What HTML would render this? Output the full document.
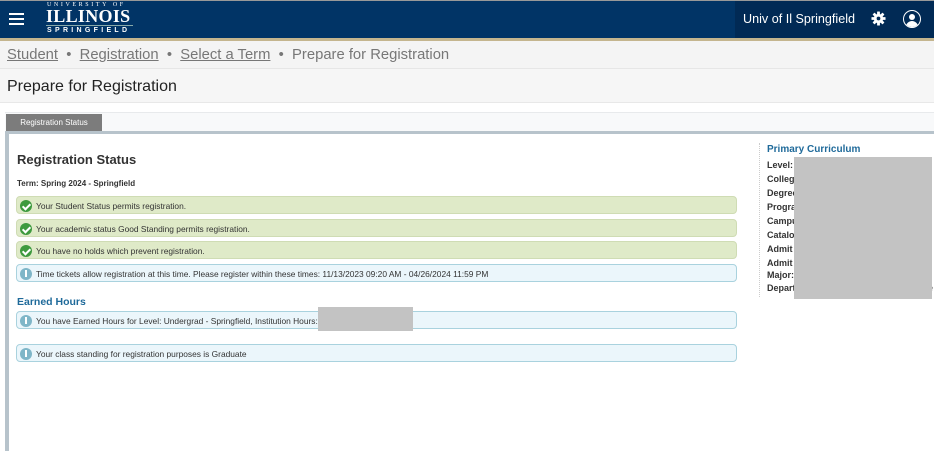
<!DOCTYPE html>
<html><head><style>
body{margin:0;width:934px;height:451px;overflow:hidden;background:#fff;font-family:"Liberation Sans",sans-serif;position:relative}
.a{position:absolute}
.msg{position:absolute;left:16px;width:721px;height:18px;border-radius:4px;font-size:8.4px;color:#333;line-height:18px;padding-left:19px;box-sizing:border-box}
.g{background:#dfeac8;border:1px solid #cfdcb4}
.b{background:#ebf6fb;border:1px solid #a9d2de}
.ic{position:absolute;left:3px;top:2.5px;width:12px;height:12px;border-radius:50%}
.g .ic{background:#3e9a3e}
.b .ic{background:#7fb6c8}
.g .ic:after{content:"";position:absolute;left:3.5px;top:2px;width:3px;height:6px;border:solid #fff;border-width:0 2px 2px 0;transform:rotate(45deg)}
.b .ic:after{content:"";position:absolute;left:5px;top:2.5px;width:2px;height:7px;background:#fff}
.lbl{position:absolute;left:767px;font-size:9px;font-weight:bold;color:#333}
</style></head><body>
<div class="a" style="left:0;top:0;width:934px;height:1px;background:#999"></div>
<div class="a" style="left:0;top:1px;width:934px;height:37px;background:#013466"></div>
<div class="a" style="left:735px;top:1px;width:199px;height:37px;background:#012a55"></div>
<div class="a" style="left:0;top:38px;width:934px;height:3px;background:#c4b58e"></div>
<div class="a" style="left:9px;top:13px;width:15px;height:2px;background:#fff;box-shadow:0 5px 0 #fff,0 10px 0 #fff"></div>
<div class="a" style="left:47px;top:2px;color:#fff;font-family:'Liberation Serif',serif;font-size:6px;letter-spacing:2.6px">UNIVERSITY OF</div>
<div class="a" style="left:46px;top:7px;color:#fff;font-family:'Liberation Serif',serif;font-size:18px;font-weight:bold;letter-spacing:0.3px;line-height:18px">ILLINOIS</div>
<div class="a" style="left:46px;top:25px;width:87px;height:1px;background:#8aa"></div>
<div class="a" style="left:47px;top:27px;color:#fff;font-size:7px;font-weight:bold;letter-spacing:3.3px">SPRINGFIELD</div>
<div class="a" style="left:743px;top:12px;color:#fff;font-size:12.6px">Univ of Il Springfield</div>
<svg class="a" style="left:871px;top:11px" width="15" height="15" viewBox="0 0 16 16"><g fill="#fff"><circle cx="8" cy="8" r="5"/><rect x="6.5" y="0.5" width="3" height="15" rx="0.5"/><rect x="6.5" y="0.5" width="3" height="15" rx="0.5" transform="rotate(45 8 8)"/><rect x="6.5" y="0.5" width="3" height="15" rx="0.5" transform="rotate(90 8 8)"/><rect x="6.5" y="0.5" width="3" height="15" rx="0.5" transform="rotate(135 8 8)"/></g><circle cx="8" cy="8" r="2" fill="#012a55"/></svg>
<div class="a" style="left:903px;top:10px;width:16px;height:16px;border:1.5px solid #fff;border-radius:50%;overflow:hidden">
<div class="a" style="left:5px;top:3px;width:6px;height:6px;background:#fff;border-radius:50%"></div>
<div class="a" style="left:2px;top:10px;width:12px;height:8px;background:#fff;border-radius:6px 6px 0 0"></div></div>
<div class="a" style="left:0;top:41px;width:934px;height:27px;background:#f4f4f4;border-bottom:1px solid #e6e6e6"></div>
<div class="a" style="left:7px;top:47px;font-size:14.8px;color:#777;white-space:nowrap"><u>Student</u> &nbsp;•&nbsp; <u>Registration</u> &nbsp;•&nbsp; <u>Select a Term</u> &nbsp;•&nbsp; Prepare for Registration</div>
<div class="a" style="left:0;top:69px;width:934px;height:33px;background:#f6f6f6;border-bottom:1px solid #e8e8e8"></div>
<div class="a" style="left:7px;top:78px;font-size:16px;color:#222">Prepare for Registration</div>
<div class="a" style="left:5px;top:112px;width:929px;height:18px;background:#f8f9fa;border-top:1px solid #e8eaec"></div>
<div class="a" style="left:6px;top:114px;width:96px;height:17px;background:#7c7c7c;color:#fff;font-size:8px;line-height:18px;text-align:center">Registration Status</div>
<div class="a" style="left:5px;top:131px;width:929px;height:3px;background:#b7c3cb"></div>
<div class="a" style="left:5px;top:131px;width:4px;height:320px;background:#b7c3cb"></div>
<div class="a" style="left:9px;top:134px;width:925px;height:317px;background:#fff;border-radius:4px 0 0 0"></div>
<div class="a" style="left:17px;top:152px;font-size:13px;font-weight:bold;color:#333">Registration Status</div>
<div class="a" style="left:17px;top:179px;font-size:8px;font-weight:bold;color:#333">Term: Spring 2024 - Springfield</div>
<div class="msg g" style="top:196px"><span class="ic"></span>Your Student Status permits registration.</div>
<div class="msg g" style="top:219px"><span class="ic"></span>Your academic status Good Standing permits registration.</div>
<div class="msg g" style="top:241px"><span class="ic"></span>You have no holds which prevent registration.</div>
<div class="msg b" style="top:264px"><span class="ic"></span>Time tickets allow registration at this time. Please register within these times: 11/13/2023 09:20 AM - 04/26/2024 11:59 PM</div>
<div class="a" style="left:17px;top:296px;font-size:10.5px;font-weight:bold;color:#1f6a9a">Earned Hours</div>
<div class="msg b" style="top:311px"><span class="ic"></span>You have Earned Hours for Level: Undergrad - Springfield, Institution Hours:</div>
<div class="a" style="left:318px;top:307px;width:95px;height:24px;background:#c3c3c3"></div>
<div class="msg b" style="top:344px"><span class="ic"></span>Your class standing for registration purposes is Graduate</div>
<div class="a" style="left:759px;top:143px;height:154px;border-left:1px dotted #ccc"></div>
<div class="a" style="left:767px;top:144px;font-size:10px;font-weight:bold;color:#1f6a9a">Primary Curriculum</div>
<div class="lbl" style="top:160px">Level:</div>
<div class="lbl" style="top:174px">College</div>
<div class="lbl" style="top:188px">Degree</div>
<div class="lbl" style="top:202px">Progra</div>
<div class="lbl" style="top:216px">Campu</div>
<div class="lbl" style="top:230px">Catalo</div>
<div class="lbl" style="top:244px">Admit</div>
<div class="lbl" style="top:258px">Admit</div>
<div class="lbl" style="top:270px">Major:</div>
<div class="lbl" style="top:283px">Depart</div>
<div class="a" style="left:928px;top:283px;font-size:9px;color:#333">e</div>
<div class="a" style="left:794px;top:157px;width:138px;height:142px;background:#c3c3c3"></div>
</body></html>
